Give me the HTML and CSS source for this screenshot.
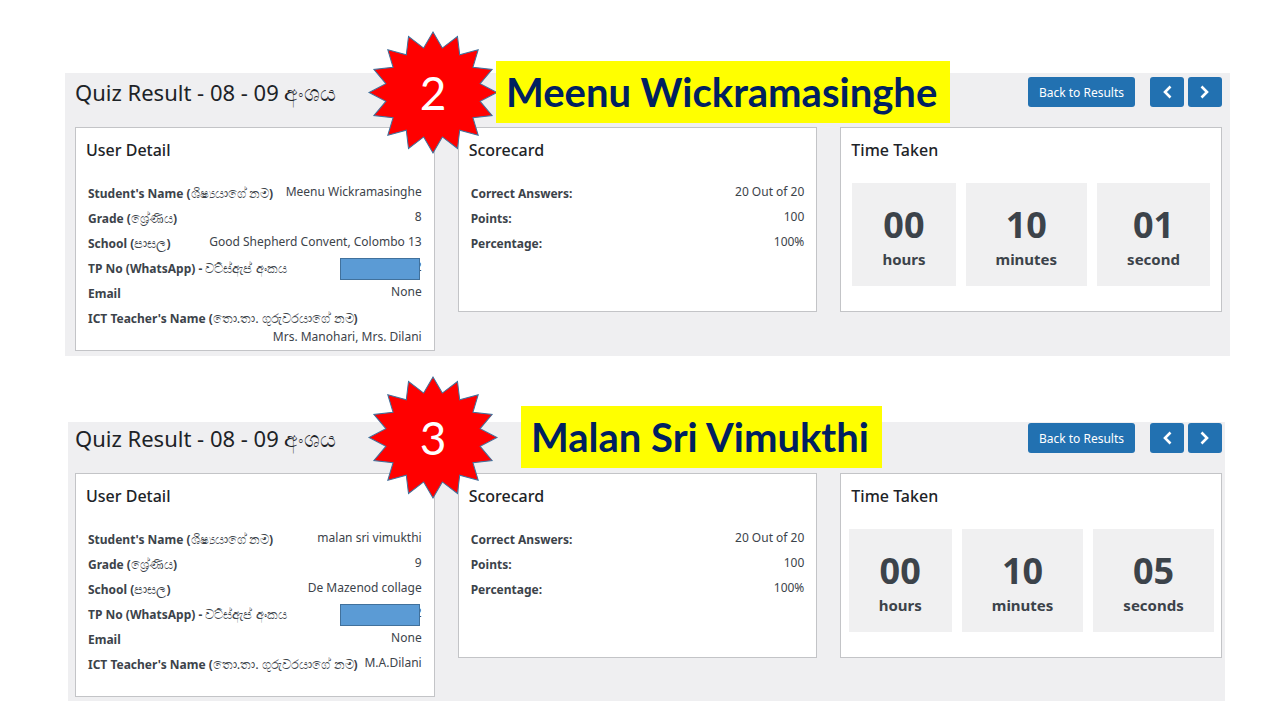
FILE: index.html
```html
<!DOCTYPE html>
<html lang="en">
<head>
  <meta charset="UTF-8" />
  <title>Quiz Result</title>
  <meta name="viewport" content="width=device-width, initial-scale=1" />
  <link rel="stylesheet" href="styles.css">
</head>
<body>
  <main class="slide">

    <section class="result result-second">
      <header class="result-header">
        <h1>Quiz Result - 08 - 09 <span class="si" lang="si">අංශය</span></h1>
        <nav class="actions">
          <a class="btn btn-back" href="#results">Back to Results</a>
          <button class="btn btn-arrow" type="button" aria-label="Previous">
            <svg viewBox="0 0 12 14" aria-hidden="true"><path d="M9.5 1.5L4 7l5.5 5.5"></path></svg>
          </button>
          <button class="btn btn-arrow" type="button" aria-label="Next">
            <svg viewBox="0 0 12 14" aria-hidden="true"><path d="M2.5 1.5L8 7l-5.5 5.5"></path></svg>
          </button>
        </nav>
      </header>

      <div class="cards">
        <article class="card card-user">
          <h2>User Detail</h2>
          <dl class="details">
            <div class="row"><dt>Student's Name (<span class="si" lang="si">ශිෂ්‍යයාගේ නම</span>)</dt><dd>Meenu Wickramasinghe</dd></div>
            <div class="row"><dt>Grade (<span class="si" lang="si">ශ්‍රේණිය</span>)</dt><dd>8</dd></div>
            <div class="row"><dt>School (<span class="si" lang="si">පාසල</span>)</dt><dd>Good Shepherd Convent, Colombo 13</dd></div>
            <div class="row"><dt>TP No (WhatsApp) - <span class="si" lang="si">වට්ස්ඇප් අංකය</span></dt><dd class="hidden-number">2</dd></div>
            <div class="row"><dt>Email</dt><dd>None</dd></div>
            <div class="row"><dt>ICT Teacher's Name (<span class="si" lang="si">තො.තා. ගුරුවරයාගේ නම</span>)</dt><dd>Mrs. Manohari, Mrs. Dilani</dd></div>
          </dl>
        </article>

        <article class="card">
          <h2>Scorecard</h2>
          <dl class="details">
            <div class="row"><dt>Correct Answers:</dt><dd>20 Out of 20</dd></div>
            <div class="row"><dt>Points:</dt><dd>100</dd></div>
            <div class="row"><dt>Percentage:</dt><dd>100%</dd></div>
          </dl>
        </article>

        <article class="card">
          <h2>Time Taken</h2>
          <div class="timer">
            <div class="unit"><strong>00</strong><span>hours</span></div>
            <div class="unit"><strong>10</strong><span>minutes</span></div>
            <div class="unit"><strong>01</strong><span>second</span></div>
          </div>
        </article>
      </div>

      <div class="rank">
        <svg viewBox="1 0 126 124" preserveAspectRatio="none" aria-hidden="true">
          <polygon points="64,1 73.2,17.2 88.1,5.6 90.3,24 108.5,18.9 103.3,36.6 122.2,38.7 110.4,53.1 127,62 110.4,70.9 122.2,85.3 103.3,87.4 108.5,105.1 90.3,100 88.1,118.4 73.2,106.8 64,123 54.8,106.8 39.9,118.4 37.7,100 19.5,105.1 24.7,87.4 5.8,85.3 17.6,70.9 1,62 17.6,53.1 5.8,38.7 24.7,36.6 19.5,18.9 37.7,24 39.9,5.6 54.8,17.2"></polygon>
        </svg>
        <span>2</span>
      </div>
      <p class="winner">Meenu Wickramasinghe</p>
    </section>

    <section class="result result-third">
      <header class="result-header">
        <h1>Quiz Result - 08 - 09 <span class="si" lang="si">අංශය</span></h1>
        <nav class="actions">
          <a class="btn btn-back" href="#results">Back to Results</a>
          <button class="btn btn-arrow" type="button" aria-label="Previous">
            <svg viewBox="0 0 12 14" aria-hidden="true"><path d="M9.5 1.5L4 7l5.5 5.5"></path></svg>
          </button>
          <button class="btn btn-arrow" type="button" aria-label="Next">
            <svg viewBox="0 0 12 14" aria-hidden="true"><path d="M2.5 1.5L8 7l-5.5 5.5"></path></svg>
          </button>
        </nav>
      </header>

      <div class="cards">
        <article class="card card-user">
          <h2>User Detail</h2>
          <dl class="details">
            <div class="row"><dt>Student's Name (<span class="si" lang="si">ශිෂ්‍යයාගේ නම</span>)</dt><dd>malan sri vimukthi</dd></div>
            <div class="row"><dt>Grade (<span class="si" lang="si">ශ්‍රේණිය</span>)</dt><dd>9</dd></div>
            <div class="row"><dt>School (<span class="si" lang="si">පාසල</span>)</dt><dd>De Mazenod collage</dd></div>
            <div class="row"><dt>TP No (WhatsApp) - <span class="si" lang="si">වට්ස්ඇප් අංකය</span></dt><dd class="hidden-number">2</dd></div>
            <div class="row"><dt>Email</dt><dd>None</dd></div>
            <div class="row"><dt>ICT Teacher's Name (<span class="si" lang="si">තො.තා. ගුරුවරයාගේ නම</span>)</dt><dd>M.A.Dilani</dd></div>
          </dl>
        </article>

        <article class="card">
          <h2>Scorecard</h2>
          <dl class="details">
            <div class="row"><dt>Correct Answers:</dt><dd>20 Out of 20</dd></div>
            <div class="row"><dt>Points:</dt><dd>100</dd></div>
            <div class="row"><dt>Percentage:</dt><dd>100%</dd></div>
          </dl>
        </article>

        <article class="card">
          <h2>Time Taken</h2>
          <div class="timer">
            <div class="unit"><strong>00</strong><span>hours</span></div>
            <div class="unit"><strong>10</strong><span>minutes</span></div>
            <div class="unit"><strong>05</strong><span>seconds</span></div>
          </div>
        </article>
      </div>

      <div class="rank">
        <svg viewBox="1 0 126 124" preserveAspectRatio="none" aria-hidden="true">
          <polygon points="64,1 73.2,17.2 88.1,5.6 90.3,24 108.5,18.9 103.3,36.6 122.2,38.7 110.4,53.1 127,62 110.4,70.9 122.2,85.3 103.3,87.4 108.5,105.1 90.3,100 88.1,118.4 73.2,106.8 64,123 54.8,106.8 39.9,118.4 37.7,100 19.5,105.1 24.7,87.4 5.8,85.3 17.6,70.9 1,62 17.6,53.1 5.8,38.7 24.7,36.6 19.5,18.9 37.7,24 39.9,5.6 54.8,17.2"></polygon>
        </svg>
        <span>3</span>
      </div>
      <p class="winner">Malan Sri Vimukthi</p>
    </section>

  </main>
</body>
</html>
```
FILE: styles.css
```css
* { box-sizing: border-box; }
body {
  margin: 0;
  background: #fff;
  color: #3c434a;
  font-family: "Noto Sans", "Open Sans", sans-serif;
  font-size: 12px;
}

.slide {
  padding: 73px 50px 19px 65px;
}

/* one grey panel per student */
.result {
  position: relative;
  background: #efeff1;
}
.result-second {
  padding: 4px 8px 5px 10px;
}
.result-third {
  margin: 66px 5px 0 3px;
  padding: 1px 3px 4px 7px;
}

.result-header {
  display: flex;
  justify-content: space-between;
  align-items: center;
  height: 30px;
  margin-bottom: 20px;
}
h1 {
  margin: 0;
  font-size: 22px;
  font-weight: 400;
  line-height: 32px;
  color: #1d2327;
}
h1 .si {
  font-size: 22px;
  line-height: 1;
}

.actions {
  display: flex;
  gap: 4px;
}
.btn {
  display: flex;
  align-items: center;
  justify-content: center;
  height: 30px;
  padding: 0;
  border: 0;
  border-radius: 3px;
  background: #2271b1;
  color: #fff;
  font-family: inherit;
  font-size: 12px;
  text-decoration: none;
}
.btn-back {
  width: 107px;
  margin-right: 11px;
}
.btn-arrow {
  width: 34px;
}
.btn-arrow svg {
  width: 12px;
  height: 14px;
  fill: none;
  stroke: #fff;
  stroke-width: 2.6;
}

.cards {
  display: grid;
  grid-template-columns: minmax(0, 360fr) minmax(0, 360fr) minmax(0, 382fr);
  gap: 23px;
  align-items: start;
}
.card {
  min-height: 185px;
  padding: 10px;
  border: 1px solid #c3c4c7;
  background: #fff;
}
.card-user {
  min-height: 224px;
  padding-bottom: 4px;
}
h2 {
  margin: 0 0 21px;
  font-size: 16px;
  font-weight: 500;
  line-height: 24px;
  color: #1d2327;
}

.details {
  margin: 0 2px;
}
.row {
  display: flex;
  flex-wrap: wrap;
  min-height: 25px;
}
dt {
  margin-top: 2px;
  font-weight: 700;
  line-height: 18px;
}
dt .si {
  font-size: 13px;
  font-weight: 400;
  line-height: 1;
}
dd {
  margin: 0 0 0 auto;
  line-height: 18px;
}

/* phone number is covered */
.hidden-number {
  position: relative;
}
.hidden-number::after {
  content: "";
  position: absolute;
  top: 0;
  right: 2px;
  width: 78px;
  height: 20px;
  border: 1px solid #41719c;
  background: #5b9bd5;
}

.timer {
  display: flex;
  justify-content: center;
  gap: 10px;
}
.unit {
  display: flex;
  flex-direction: column;
  align-items: center;
  height: 103px;
  padding: 20px 30px;
  background: #f0f0f1;
}
.unit strong {
  font-size: 36px;
  line-height: 44px;
}
.unit span {
  font-size: 15px;
  font-weight: 700;
  line-height: 24px;
}

.rank {
  position: absolute;
  top: -42px;
  left: 304px;
  display: grid;
  place-items: center;
  width: 128px;
  height: 124px;
  padding-bottom: 2px;
  color: #fff;
  font-family: Lato, sans-serif;
  font-size: 46px;
}
.rank svg {
  position: absolute;
  top: 0;
  left: 0;
  width: 128px;
  height: 123px;
  overflow: visible;
  fill: #f00;
  stroke: #41719c;
}
.rank span {
  position: relative;
}
.winner {
  position: absolute;
  top: -12px;
  left: 431px;
  margin: 0;
  padding: 0 13px 0 10px;
  background: #ff0;
  color: #002060;
  font-family: Lato, sans-serif;
  font-size: 40px;
  font-weight: 700;
  line-height: 62px;
  white-space: nowrap;
}
.result-third .rank {
  top: -46px;
  left: 301px;
}
.result-third .winner {
  top: -16px;
  left: 453px;
}
```
